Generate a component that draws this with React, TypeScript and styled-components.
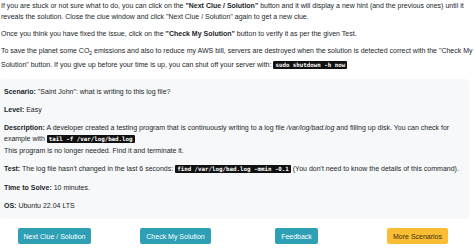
import React from "react";
import styled, { createGlobalStyle } from "styled-components";

const GlobalStyle = createGlobalStyle`
  body {
    margin: 0;
    background: #ffffff;
    color: #212529;
    font-family: "Liberation Sans", Arial, sans-serif;
  }
`;

const Page = styled.div`
  width: 474px;
  height: 251px;
  overflow: hidden;
  padding: 0 0 0 1px;
  box-sizing: border-box;
  font-size: 7px;
  line-height: 11px;
`;

const Para = styled.p`
  margin: 0 0 6px;
`;

const Code = styled.code`
  font-family: "DejaVu Sans Mono", "Liberation Mono", monospace;
  font-size: 5.8px;
  font-weight: bold;
  background: #111;
  color: #fff;
  padding: 1px 2px;
  border-radius: 1px;
`;

const Sub = styled.sub`
  font-size: 5px;
`;

const Panel = styled.div`
  background: #f7f8fa;
  border-radius: 4px;
  margin: 8px 5px 0 -1px;
  padding: 7px 2px 1px 4px;
`;

const Field = styled.p`
  margin: 0 0 7px;
`;

const Label = styled.b`
  font-weight: bold;
`;

const ButtonRow = styled.div`
  display: grid;
  grid-template-columns: repeat(4, 1fr);
  justify-items: center;
  margin: 9px -4px 0 -7px;
`;

const Button = styled.button<{ $variant?: "info" | "warning" }>`
  font-family: "Liberation Sans", Arial, sans-serif;
  font-size: 7px;
  height: 16px;
  padding: 0 6px;
  border: none;
  border-radius: 2px;
  cursor: pointer;
  background: ${(p) => (p.$variant === "warning" ? "#fbbd34" : "#2ea0b6")};
  color: ${(p) => (p.$variant === "warning" ? "#3a2e12" : "#ffffff")};
`;

const App = () => {
  return (
    <Page>
      <GlobalStyle />
      <Para>
        If you are stuck or not sure what to do, you can click on the{" "}
        <b>"Next Clue / Solution"</b> button and it will display a new hint (and the
        previous ones) until it reveals the solution. Close the clue window and click
        "Next Clue / Solution" again to get a new clue.
      </Para>
      <Para>
        Once you think you have fixed the issue, click on the <b>"Check My Solution"</b>{" "}
        button to verify it as per the given Test.
      </Para>
      <Para>
        To save the planet some CO<Sub>2</Sub> emissions and also to reduce my AWS bill,
        servers are destroyed when the solution is detected correct with the "Check My
        Solution" button. If you give up before your time is up, you can shut off your
        server with: <Code>sudo shutdown -h now</Code>
      </Para>
      <Panel>
        <Field>
          <Label>Scenario:</Label> "Saint John": what is writing to this log file?
        </Field>
        <Field>
          <Label>Level:</Label> Easy
        </Field>
        <Field>
          <Label>Description:</Label> A developer created a testing program that is
          continuously writing to a log file <i>/var/log/bad.log</i> and filling up disk.
          You can check for example with <Code>tail -f /var/log/bad.log</Code>
          <br />
          This program is no longer needed. Find it and terminate it.
        </Field>
        <Field>
          <Label>Test:</Label> The log file hasn't changed in the last 6 seconds:{" "}
          <Code>find /var/log/bad.log -mmin -0.1</Code> (You don't need to know the
          details of this command).
        </Field>
        <Field>
          <Label>Time to Solve:</Label> 10 minutes.
        </Field>
        <Field>
          <Label>OS:</Label> Ubuntu 22.04 LTS
        </Field>
      </Panel>
      <ButtonRow>
        <Button>Next Clue / Solution</Button>
        <Button>Check My Solution</Button>
        <Button>Feedback</Button>
        <Button $variant="warning">More Scenarios</Button>
      </ButtonRow>
    </Page>
  );
};

export default App;
